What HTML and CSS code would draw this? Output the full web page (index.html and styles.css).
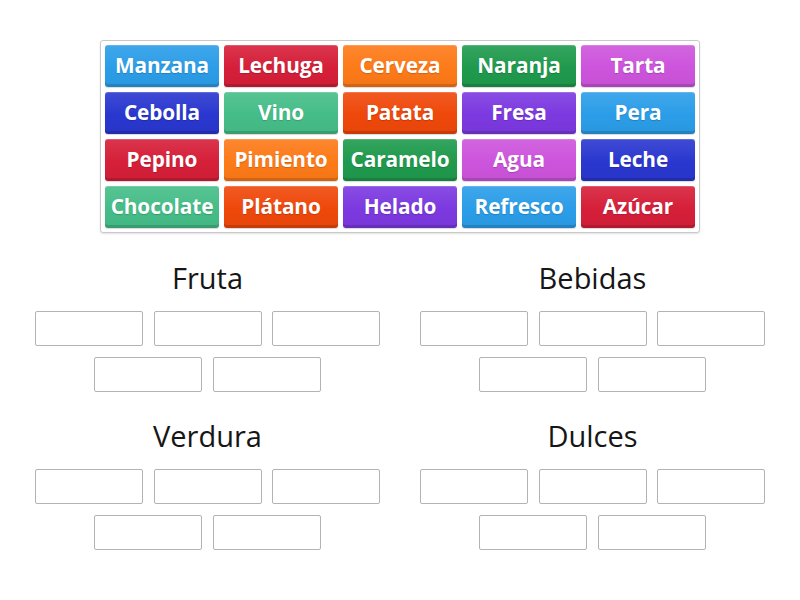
FILE: index.html
```html
<!DOCTYPE html>
<html lang="es">
<head>
<meta charset="utf-8">
<title>Ordenar por grupo</title>
<link rel="stylesheet" href="styles.css">
</head>
<body>
<div class="page">
  <div class="bank">
    <div class="tile c-blue">Manzana</div>
    <div class="tile c-red">Lechuga</div>
    <div class="tile c-orange">Cerveza</div>
    <div class="tile c-green">Naranja</div>
    <div class="tile c-pink">Tarta</div>
    <div class="tile c-navy">Cebolla</div>
    <div class="tile c-mint">Vino</div>
    <div class="tile c-vermilion">Patata</div>
    <div class="tile c-purple">Fresa</div>
    <div class="tile c-blue">Pera</div>
    <div class="tile c-red">Pepino</div>
    <div class="tile c-orange">Pimiento</div>
    <div class="tile c-green">Caramelo</div>
    <div class="tile c-pink">Agua</div>
    <div class="tile c-navy">Leche</div>
    <div class="tile c-mint">Chocolate</div>
    <div class="tile c-vermilion">Plátano</div>
    <div class="tile c-purple">Helado</div>
    <div class="tile c-blue">Refresco</div>
    <div class="tile c-red">Azúcar</div>
  </div>

  <div class="groups">
    <div class="group">
      <h2 class="group-title">Fruta</h2>
      <div class="slots">
        <div class="slot"></div><div class="slot"></div><div class="slot"></div>
        <div class="slot"></div><div class="slot"></div>
      </div>
    </div>
    <div class="group">
      <h2 class="group-title">Bebidas</h2>
      <div class="slots">
        <div class="slot"></div><div class="slot"></div><div class="slot"></div>
        <div class="slot"></div><div class="slot"></div>
      </div>
    </div>
    <div class="group">
      <h2 class="group-title">Verdura</h2>
      <div class="slots">
        <div class="slot"></div><div class="slot"></div><div class="slot"></div>
        <div class="slot"></div><div class="slot"></div>
      </div>
    </div>
    <div class="group">
      <h2 class="group-title">Dulces</h2>
      <div class="slots">
        <div class="slot"></div><div class="slot"></div><div class="slot"></div>
        <div class="slot"></div><div class="slot"></div>
      </div>
    </div>
  </div>
</div>
</body>
</html>
```
FILE: styles.css
```css
* { box-sizing: border-box; }

html, body {
  margin: 0;
  padding: 0;
  background: #ffffff;
}

body {
  font-family: "Open Sans", "Noto Sans", "DejaVu Sans", sans-serif;
  color: #161616;
}

.page {
  width: 800px;
  height: 600px;
  padding-top: 40px;
}

.bank {
  width: 600px;
  margin: 0 auto;
  padding: 4px;
  border: 1px solid #c9c9c9;
  border-radius: 3px;
  box-shadow: 0 1px 2px rgba(0, 0, 0, 0.12);
  display: grid;
  grid-template-columns: repeat(5, 114px);
  grid-auto-rows: 42px;
  gap: 5px;
}

.tile {
  display: flex;
  align-items: center;
  justify-content: center;
  padding-bottom: 2px;
  border-radius: 3px;
  color: #ffffff;
  font-weight: 700;
  font-size: 20.8px;
  letter-spacing: -0.1px;
  white-space: nowrap;
  text-shadow: 0 1px 1px rgba(0, 0, 0, 0.18);
  background-image: linear-gradient(to bottom, rgba(255, 255, 255, 0.10), rgba(255, 255, 255, 0) 55%, rgba(0, 0, 0, 0.04));
  box-shadow: inset 0 -3px 0 rgba(0, 0, 0, 0.14), inset 0 1px 0 rgba(255, 255, 255, 0.18), 0 1px 1px rgba(0, 0, 0, 0.15);
}

.c-blue { background-color: #2b9de8; }
.c-red { background-color: #d61f39; }
.c-orange { background-color: #fd7a18; }
.c-green { background-color: #1f9a4d; }
.c-pink { background-color: #cd54dc; }
.c-navy { background-color: #2a37cf; }
.c-mint { background-color: #45bd88; }
.c-vermilion { background-color: #ef480b; }
.c-purple { background-color: #7c39e0; }

.groups {
  margin: 26px 35px 0;
  display: grid;
  grid-template-columns: 345px 345px;
  column-gap: 40px;
  row-gap: 25px;
}

.group {
  display: flex;
  flex-direction: column;
}

.group-title {
  margin: 0;
  font-size: 29px;
  font-weight: 400;
  line-height: 38px;
  text-align: center;
  color: #161616;
}

.slots {
  margin-top: 14px;
  display: flex;
  flex-wrap: wrap;
  justify-content: center;
  column-gap: 10.5px;
  row-gap: 11px;
}

.slot {
  width: 108px;
  height: 35px;
  border: 1px solid #b3b3b3;
  border-radius: 2px;
  background: #ffffff;
}
```
